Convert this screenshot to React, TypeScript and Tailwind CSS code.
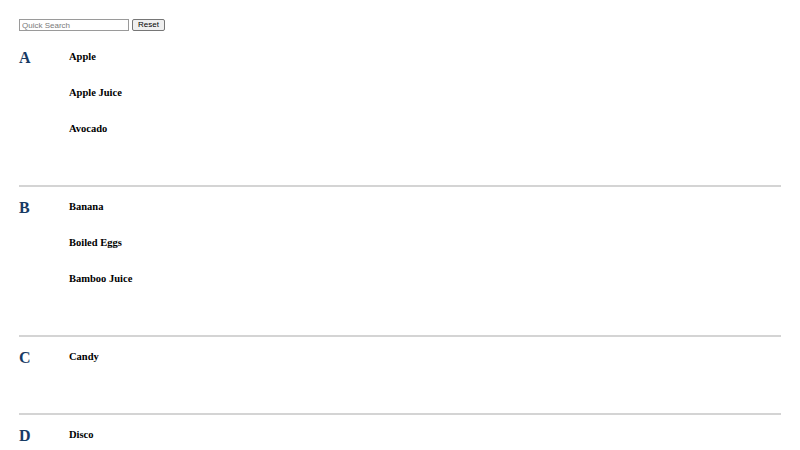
import { useState } from 'react'

const groups = [
  { letter: 'A', items: ['Apple', 'Apple Juice', 'Avocado'] },
  { letter: 'B', items: ['Banana', 'Boiled Eggs', 'Bamboo Juice'] },
  { letter: 'C', items: ['Candy'] },
  { letter: 'D', items: ['Disco'] },
]

export default function App() {
  const [query, setQuery] = useState('')

  const filtered = groups
    .map((g) => ({
      ...g,
      items: g.items.filter((i) => i.toLowerCase().includes(query.toLowerCase())),
    }))
    .filter((g) => g.items.length > 0)

  return (
    <div className="min-h-[450px] bg-white px-[19px] pt-[19px] font-['Liberation_Serif',serif] text-black">
      {/* Search bar */}
      <div className="mb-[6px] flex items-center gap-[3px] font-['Liberation_Sans',sans-serif]">
        <input
          type="text"
          value={query}
          onChange={(e) => setQuery(e.target.value)}
          placeholder="Quick Search"
          className="h-[12px] w-[110px] border border-[#9a9a9a] px-[2px] text-[8px] leading-none placeholder-[#7a7a7a] outline-none"
        />
        <button
          type="button"
          onClick={() => setQuery('')}
          className="h-[12px] rounded-[2px] border border-[#767676] bg-[#efefef] px-[5px] text-[8px] leading-none text-black"
        >
          Reset
        </button>
      </div>

      {filtered.map((group) => (
        <div
          key={group.letter}
          className="flex border-b-2 border-[#d4d4d4] pt-[2px] pb-[38px]"
        >
          <div className="flex h-[36px] w-[50px] items-center">
            <span className="mt-[2px] text-[16px] font-bold leading-none text-[#173a64]">
              {group.letter}
            </span>
          </div>
          <div className="flex flex-col">
            {group.items.map((item) => (
              <div key={item} className="flex h-[36px] items-center">
                <span className="mt-[1px] text-[10.5px] font-bold leading-none">{item}</span>
              </div>
            ))}
          </div>
        </div>
      ))}
    </div>
  )
}
